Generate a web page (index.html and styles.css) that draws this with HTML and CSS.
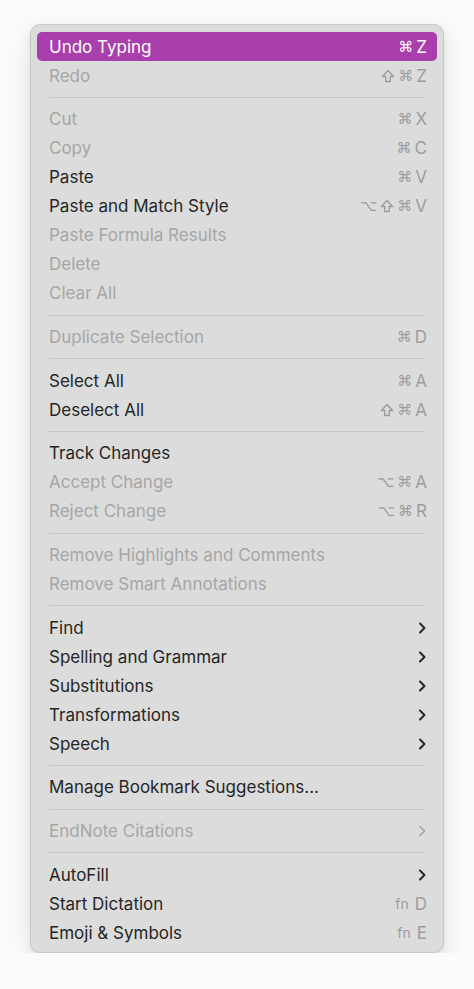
FILE: index.html
```html
<!DOCTYPE html>
<html lang="en">
<head>
<meta charset="utf-8">
<title>Edit menu</title>
<link rel="stylesheet" href="styles.css">
</head>
<body>
<div class="menu">
  <div class="item active"><span class="label">Undo Typing</span><span class="key"><span class="sym">⌘</span>Z</span></div>
  <div class="item off"><span class="label">Redo</span><span class="key"><svg class="shift" viewBox="0 0 14 14"><path d="M7 1.5 L12.5 7.5 H9.3 V12.5 H4.7 V7.5 H1.5 Z"/></svg><span class="sym">⌘</span>Z</span></div>
  <div class="sep"></div>
  <div class="item off"><span class="label">Cut</span><span class="key"><span class="sym">⌘</span>X</span></div>
  <div class="item off"><span class="label">Copy</span><span class="key"><span class="sym">⌘</span>C</span></div>
  <div class="item"><span class="label">Paste</span><span class="key"><span class="sym">⌘</span>V</span></div>
  <div class="item"><span class="label">Paste and Match Style</span><span class="key"><span class="sym">⌥</span><svg class="shift" viewBox="0 0 14 14"><path d="M7 1.5 L12.5 7.5 H9.3 V12.5 H4.7 V7.5 H1.5 Z"/></svg><span class="sym">⌘</span>V</span></div>
  <div class="item off"><span class="label">Paste Formula Results</span></div>
  <div class="item off"><span class="label">Delete</span></div>
  <div class="item off"><span class="label">Clear All</span></div>
  <div class="sep"></div>
  <div class="item off"><span class="label">Duplicate Selection</span><span class="key"><span class="sym">⌘</span>D</span></div>
  <div class="sep"></div>
  <div class="item"><span class="label">Select All</span><span class="key"><span class="sym">⌘</span>A</span></div>
  <div class="item"><span class="label">Deselect All</span><span class="key"><svg class="shift" viewBox="0 0 14 14"><path d="M7 1.5 L12.5 7.5 H9.3 V12.5 H4.7 V7.5 H1.5 Z"/></svg><span class="sym">⌘</span>A</span></div>
  <div class="sep"></div>
  <div class="item"><span class="label">Track Changes</span></div>
  <div class="item off"><span class="label">Accept Change</span><span class="key"><span class="sym">⌥</span><span class="sym">⌘</span>A</span></div>
  <div class="item off"><span class="label">Reject Change</span><span class="key"><span class="sym">⌥</span><span class="sym">⌘</span>R</span></div>
  <div class="sep"></div>
  <div class="item off"><span class="label">Remove Highlights and Comments</span></div>
  <div class="item off"><span class="label">Remove Smart Annotations</span></div>
  <div class="sep"></div>
  <div class="item"><span class="label">Find</span><svg class="chev" viewBox="0 0 8 12"><path d="M2 1.5 L6.5 6 L2 10.5"/></svg></div>
  <div class="item"><span class="label">Spelling and Grammar</span><svg class="chev" viewBox="0 0 8 12"><path d="M2 1.5 L6.5 6 L2 10.5"/></svg></div>
  <div class="item"><span class="label">Substitutions</span><svg class="chev" viewBox="0 0 8 12"><path d="M2 1.5 L6.5 6 L2 10.5"/></svg></div>
  <div class="item"><span class="label">Transformations</span><svg class="chev" viewBox="0 0 8 12"><path d="M2 1.5 L6.5 6 L2 10.5"/></svg></div>
  <div class="item"><span class="label">Speech</span><svg class="chev" viewBox="0 0 8 12"><path d="M2 1.5 L6.5 6 L2 10.5"/></svg></div>
  <div class="sep"></div>
  <div class="item"><span class="label">Manage Bookmark Suggestions...</span></div>
  <div class="sep"></div>
  <div class="item off"><span class="label">EndNote Citations</span><svg class="chev" viewBox="0 0 8 12"><path d="M2 1.5 L6.5 6 L2 10.5"/></svg></div>
  <div class="sep"></div>
  <div class="item"><span class="label">AutoFill</span><svg class="chev" viewBox="0 0 8 12"><path d="M2 1.5 L6.5 6 L2 10.5"/></svg></div>
  <div class="item"><span class="label">Start Dictation</span><span class="key"><span class="fn">fn</span>D</span></div>
  <div class="item"><span class="label">Emoji &amp; Symbols</span><span class="key"><span class="fn">fn</span>E</span></div>
</div>
</body>
</html>
```

FILE: styles.css
```css
html, body {
  margin: 0;
  padding: 0;
  background: #fbfbfb;
}
body {
  font-family: Inter, "Helvetica Neue", "Liberation Sans", sans-serif;
  font-size: 17px;
  color: #262626;
}
.menu {
  margin: 24px 0 0 30px;
  width: 414px;
  box-sizing: border-box;
  height: 929px;
  padding: 7px 6px 3px 6px;
  background: #dcdcdc;
  border: 1px solid #c9c9c9;
  border-radius: 10px;
  box-shadow: 0 8px 22px rgba(0, 0, 0, 0.12), 0 1px 3px rgba(0, 0, 0, 0.08);
  display: flex;
  flex-direction: column;
}
.item {
  height: 29px;
  flex: 0 0 29px;
  display: flex;
  align-items: center;
  justify-content: space-between;
  padding: 0 10px 0 12px;
  border-radius: 5px;
  white-space: nowrap;
}
.item.off .label {
  color: #a6a6a6;
}
.item.active {
  background: #a93fac;
  color: #ffffff;
}
.item.active .key {
  color: #ffffff;
}
.key {
  color: #9c9c9c;
  display: flex;
  align-items: center;
  gap: 3px;
}
.sym {
  font-family: "DejaVu Sans", sans-serif;
  font-size: 15px;
}
.shift {
  width: 14px;
  height: 14px;
  fill: none;
  stroke: currentColor;
  stroke-width: 1.4;
  stroke-linejoin: round;
}
.fn {
  font-size: 14px;
  margin-right: 3px;
}
.chev {
  width: 8px;
  height: 12px;
  fill: none;
  stroke: #262626;
  stroke-width: 2;
  stroke-linecap: round;
  stroke-linejoin: round;
  margin-right: 1px;
}
.item.off .chev {
  stroke: #a6a6a6;
  stroke-width: 1.6;
}
.sep {
  flex: 0 0 14.7px;
  height: 14.7px;
  margin: 0 12px;
  display: flex;
  align-items: center;
}
.sep::before {
  content: "";
  display: block;
  width: 100%;
  height: 1px;
  background: #c6c6c6;
}
```
